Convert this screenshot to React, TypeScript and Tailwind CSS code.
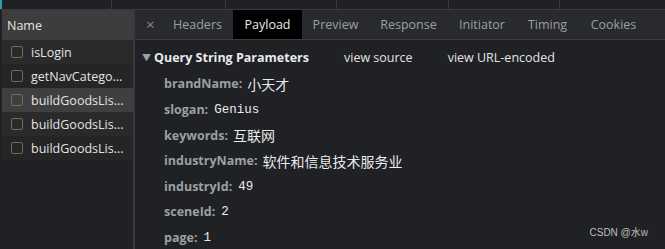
import React from "react";

const sans = { fontFamily: '"Open Sans", "Noto Sans", "Noto Sans CJK SC", sans-serif' };

const rows = [
  { name: "isLogin", bg: "bg-[#2a2a2a]" },
  { name: "getNavCatego...", bg: "bg-[#252525]" },
  { name: "buildGoodsLis...", bg: "bg-[#3f3f3f]" },
  { name: "buildGoodsLis...", bg: "bg-[#2a2a2a]" },
  { name: "buildGoodsLis...", bg: "bg-[#252525]" },
];

const tabs: { t: string; w: string }[] = [
  { t: "Headers", w: "w-[71px]" },
  { t: "Payload", w: "w-[69px]" },
  { t: "Preview", w: "w-[67px]" },
  { t: "Response", w: "w-[79px]" },
  { t: "Initiator", w: "w-[68px]" },
  { t: "Timing", w: "w-[63px]" },
  { t: "Cookies", w: "w-[69px]" },
];

const params: { k: string; v: string; mono?: boolean }[] = [
  { k: "brandName:", v: "小天才" },
  { k: "slogan:", v: "Genius", mono: true },
  { k: "keywords:", v: "互联网" },
  { k: "industryName:", v: "软件和信息技术服务业" },
  { k: "industryId:", v: "49", mono: true },
  { k: "sceneId:", v: "2", mono: true },
  { k: "page:", v: "1", mono: true },
];

export default function App() {
  return (
    <div className="w-[665px] h-[249px] overflow-hidden bg-[#202124] flex flex-col relative" style={sans}>
      {/* top strip */}
      <div className="h-[10px] flex border-b border-[#3a3a3a] shrink-0">
        <div className="w-[2px] bg-[#2e9ea8]" />
        <div className="w-[110px] border-r border-[#3a3a3a]" />
        <div className="w-[114px] border-r border-[#3a3a3a]" />
        <div className="w-[111px] border-r border-[#3a3a3a]" />
        <div className="w-[112px] border-r border-[#3a3a3a]" />
        <div className="w-[111px] border-r border-[#3a3a3a]" />
        <div className="flex-1" />
      </div>
      <div className="flex flex-1 min-h-0">
        {/* left panel */}
        <div className="w-[133px] pl-[2px] flex flex-col bg-[#202124] shrink-0">
          <div className="h-[30px] bg-[#3d3d3d] flex items-center pl-[5px] pt-[2px] text-[12.5px] text-[#e3e3e3]">Name</div>
          {rows.map((r, i) => (
            <div key={i} className={`h-[24px] flex items-center ${r.bg}`}>
              <div className="ml-[9px] w-[12px] h-[12px] border border-[#6b6b6b] rounded-[2px]" />
              <span className="ml-[8px] pt-[2px] text-[12.5px] text-[#e3e3e3] whitespace-nowrap">{r.name}</span>
            </div>
          ))}
        </div>
        <div className="w-[2px] bg-[#3a3a3a] shrink-0" />
        {/* right panel */}
        <div className="flex-1 flex flex-col min-w-0">
          <div className="h-[30px] bg-[#292a2d] border-b border-[#3c3c3c] flex items-stretch text-[12.5px] shrink-0">
            <div className="w-[27px] shrink-0 flex items-center pl-[11px] text-[#8a8a8a] text-[15px]">×</div>
            {tabs.map(({ t, w }) => (
              <div
                key={t}
                className={`${w} shrink-0 flex items-center justify-center pt-[2px] ${t === "Payload" ? "bg-black text-[#e8eaed]" : "text-[#9aa0a6]"}`}
              >
                {t}
              </div>
            ))}
          </div>
          <div className="flex-1 pt-[6px]">
            <div className="h-[24px] flex items-center text-[13px]">
              <span className="ml-[7px] text-[#9aa0a6] text-[9px]">▼</span>
              <span className="ml-[3px] font-bold text-[12.5px] text-[#e8eaed] w-[190px]">Query String Parameters</span>
              <span className="text-[12.5px] text-[#e3e3e3]">view source</span>
              <span className="ml-[35px] text-[12.5px] text-[#e3e3e3]">view URL-encoded</span>
            </div>
            <div className="flex flex-col pl-[29px] pt-[2px]">
              {params.map((p) => (
                <div key={p.k} className="h-[25.6px] flex items-center whitespace-nowrap">
                  <span className="font-bold text-[12.5px] text-[#9aa0a6]">{p.k}</span>
                  <span
                    className={`${p.mono ? "ml-[6px] text-[12.5px]" : "ml-[5px] text-[14px]"} text-[#e8eaed]`}
                    style={p.mono ? { fontFamily: '"Liberation Mono", monospace' } : { fontFamily: '"Noto Sans CJK SC", sans-serif' }}
                  >
                    {p.v}
                  </span>
                </div>
              ))}
            </div>
          </div>
        </div>
      </div>
      <div className="absolute right-[17px] bottom-[9px] text-[10px] text-[#bdbdbd]" style={{ fontFamily: '"Liberation Sans", "Noto Sans CJK SC", sans-serif' }}>
        CSDN @水w
      </div>
    </div>
  );
}
